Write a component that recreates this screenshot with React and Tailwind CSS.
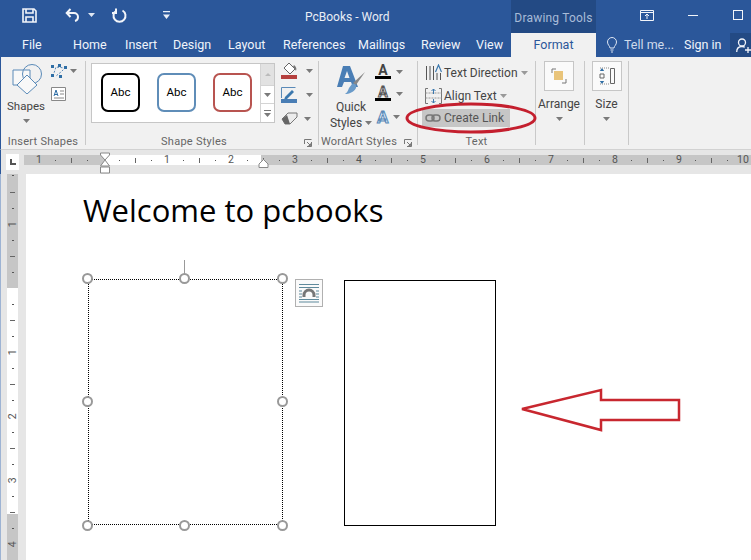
import React from "react";

const Caret = ({ className = "" }) => (
  <svg width="7" height="4" viewBox="0 0 7 4" className={`shrink-0 ${className}`}><path d="M0 0h7L3.5 4z" fill="#7a7a7a" /></svg>
);

const Launcher = ({ className = "" }) => (
  <svg width="8" height="8" viewBox="0 0 8 8" className={`shrink-0 ${className}`} fill="none" stroke="#777"><path d="M.5 5V.5H7.5" /><path d="M7.5 3v4.5H3" /><path d="M3 3l3.5 3.5M6.5 4.5v2h-2" /></svg>
);

const tabs = [["File", 51], ["Home", 52], ["Insert", 48], ["Design", 55], ["Layout", 55], ["References", 75], ["Mailings", 63], ["Review", 55], ["View", 35]];

function TitleBar() {
  return (
    <div className="flex h-[33px] bg-[#2b579a] text-[#e9eef6]">
      <div className="flex w-[511px] items-center pb-[3px] pl-[22px]">
        <svg width="15" height="15" viewBox="0 0 15 15" fill="none" stroke="#f2f5fa" strokeWidth="1.6"><path d="M1 1h11l2 2v11H1z" /><path d="M4 1v4h7V1M4 14V9h7v5" /></svg>
        <svg className="ml-[28px]" width="15" height="14" viewBox="0 0 15 14" fill="none" stroke="#f2f5fa" strokeWidth="2"><path d="M5.500 1 1.700 5l3.800 4" /><path d="M2 5h7a4 4 0 0 1 4 4c0 2-1 3.500-3 4" /></svg>
        <Caret className="ml-[8px] [&_path]:fill-[#dfe7f3]" />
        <svg className="ml-[17px]" width="15" height="15" viewBox="0 0 15 15" fill="none" stroke="#f2f5fa" strokeWidth="2"><path d="M10.500 2.500a6 6 0 1 1-6 0" /><path d="M4 0.500v4.500H0" /></svg>
        <svg className="ml-[36px]" width="7" height="8" viewBox="0 0 7 8"><path d="M0 0h7v1.200H0zM0 3.500h7L3.500 8z" fill="#e9eef6" /></svg>
        <span className="ml-[135px] pt-[4px] text-[12px] leading-none whitespace-nowrap">PcBooks - Word</span>
      </div>
      <div className="flex w-[85px] items-center justify-center bg-[#234a84] pt-[3px] text-[12px] tracking-[.2px] whitespace-nowrap text-[#a8bcd8]">Drawing Tools</div>
      <div className="flex flex-1 items-center pb-[3px] pl-[44px]">
        <svg width="14" height="11" viewBox="0 0 14 11" fill="none" stroke="#f2f5fa"><path d="M.5.5h13v10H.5zM.5 2.500h13" /><path d="M7 9V4M5 6l2-2 2 2" /></svg>
        <span className="ml-[34px] h-[1px] w-[10px] bg-[#f2f5fa]" />
        <span className="ml-[35px] h-[10px] w-[10px] border border-[#f2f5fa]" />
      </div>
    </div>
  );
}

function TabBar() {
  return (
    <div className="flex h-[24px] items-center bg-[#2b579a] pl-[22px] text-[12.500px] text-[#f0f4fa]">
      {tabs.map(([t, w]) => <span key={t} style={{ width: w }} className="shrink-0">{t}</span>)}
      <span className="flex h-full w-[85px] shrink-0 items-center justify-center bg-[#f1f1f1] text-[#2b579a]">Format</span>
      <svg className="ml-[11px]" width="10" height="16" viewBox="0 0 10 16" fill="none" stroke="#dfe7f3"><path d="M3 11c0-2-2.500-3-2.500-6a4.500 4.500 0 0 1 9 0c0 3-2.500 4-2.500 6zM3.500 13h3M4 15h2" /></svg>
      <span className="ml-[7px] w-[60px] shrink-0 whitespace-nowrap text-[#cfdbec]">Tell me...</span>
      <span className="w-[46px] shrink-0 whitespace-nowrap">Sign in</span>
      <span className="flex h-full flex-1 items-center bg-[#234a84] pl-[6px]">
        <svg width="15" height="15" viewBox="0 0 15 15" fill="none" stroke="#f2f5fa" strokeWidth="1.300"><circle cx="6" cy="4.500" r="3.500" /><path d="M.7 14c0-3.500 2-5.500 5.300-5.500 1 0 2 .2 2.800.7M9 12h6M12 9v6" /></svg>
      </span>
    </div>
  );
}

function Group({ w, label, children }) {
  return (
    <div style={{ width: w }} className="flex h-[84px] shrink-0 flex-col border-r border-[#c9c9c9]">
      <div className="flex h-[73px]">{children}</div>
      <div className="-mb-[3px] flex h-[14px] items-center justify-center text-[11px] leading-none tracking-[.25px] whitespace-nowrap text-[#666]">
        {label}
      </div>
    </div>
  );
}

const AbcBox = ({ border }) => (
  <div className={`flex h-[39px] w-[39px] items-center justify-center rounded-[7px] border-2 text-[11.500px] text-black ${border}`}>Abc</div>
);

const ABar = ({ hollow }) => (
  <span className="flex w-[16px] flex-col items-center">
    <span className={`text-[14px] leading-[12px] font-bold ${hollow ? "text-white [-webkit-text-stroke:1px_#555]" : "text-[#444]"}`}>A</span>
    <span className="h-[3px] w-[16px] bg-black" />
  </span>
);

function Ribbon() {
  return (
    <div className="flex h-[93px] border-b border-l border-b-[#d2d2d2] border-l-[#2b579a] bg-[#f1f1f1] pt-[4px] text-[12px] text-[#444]">
      <Group w={85} label="Insert Shapes">
        <div className="flex w-[50px] flex-col items-center pt-[3px]">
          <svg width="30" height="30" viewBox="0 0 30 30" fill="none" stroke="#5a8ab8" strokeWidth="1" className="ml-[1px]">
            <path d="M1 6h17v15H1z" fill="#f8f8f8" />
            <circle cx="20" cy="10" r="9.500" />
            <path d="M15 11l10 10-10 9-10-9z" fill="#f8f8f8" />
          </svg>
          <span className="mt-[4px] text-[11.500px] leading-[16px]">Shapes</span>
          <Caret className="mt-[5px]" />
        </div>
        <div className="flex flex-col pt-[3px]">
          <div className="flex items-center">
            <svg width="16" height="14" viewBox="0 0 16 14" fill="none" stroke="#5a8ab8"><path d="M2 12l3-9 9 1-4 4-5 4" strokeDasharray="2 1.500" /><path d="M0 1h3v3H0zM7 0h3v3H7zM13 2h3v3h-3zM0 10h3v3H0zM8 11h3v3H8z" fill="#2f6ea5" stroke="none" /></svg>
            <Caret className="ml-[3px]" />
          </div>
          <svg className="mt-[9px]" width="15" height="14" viewBox="0 0 15 14" fill="none"><path d="M.5.5h14v13H.5z" stroke="#888" fill="#fff" /><path d="M3 9l2-6 2 6M3.700 7.500h2.600" stroke="#2f6ea5" /><path d="M9 4h4M9 7h4M3 11h10" stroke="#888" /></svg>
        </div>
      </Group>

      <Group w={233} label={<span className="relative flex w-full justify-center pr-[16px]">Shape Styles<Launcher className="absolute top-[3px] right-[6px]" /></span>}>
        <div className="mt-[2px] ml-[5px] flex h-[60px] w-[184px] border border-[#c6c6c6] bg-white">
          <div className="flex flex-1 items-center gap-[17px] pb-[1px] pl-[9px]">
            <AbcBox border="border-black" />
            <AbcBox border="border-[#5f8db8]" />
            <AbcBox border="border-[#b85450]" />
          </div>
          <div className="flex w-[14px] flex-col border-l border-[#d4d4d4]">
            <div className="flex h-[21px] items-center justify-center bg-[#e2e2e2]"><svg width="6" height="3" viewBox="0 0 6 3"><path d="M0 3h6L3 0z" fill="#bbb" /></svg></div>
            <div className="flex h-[19px] items-center justify-center border-y border-[#d4d4d4]"><Caret /></div>
            <div className="flex flex-1 flex-col items-center justify-center gap-[2px]"><span className="h-[1px] w-[7px] bg-[#777]" /><Caret /></div>
          </div>
        </div>
        <div className="ml-[6px] flex flex-col pt-[1px]">
          <div className="flex items-center gap-[8px]">
            <svg width="17" height="18" viewBox="0 0 17 18"><path d="M8 1l6 6-5 5-6-6z" fill="#fff" stroke="#666" /><path d="M13 3c2 2 3 3 2 6-1-2-2-3-3-4z" fill="#777" /><rect x="0" y="13" width="16" height="4" fill="#b5403e" /></svg>
            <Caret />
          </div>
          <div className="mt-[7px] flex items-center gap-[8px]">
            <svg width="17" height="16" viewBox="0 0 17 16" fill="none"><path d="M.5 11V.5h14" stroke="#5a8ab8" /><path d="M4 10l7-7 2 2-7 7-3 1z" fill="#3b78ae" /><rect x="0" y="12" width="16" height="4" fill="#4a7eb5" /></svg>
            <Caret />
          </div>
          <div className="mt-[9px] flex items-center gap-[6px]">
            <svg width="17" height="13" viewBox="0 0 17 13"><path d="M1 7l6-6h9v4l-7 7H4z" fill="#ececec" stroke="#777" /><path d="M1 7l3 5h5L6 3z" fill="#666" /></svg>
            <Caret />
          </div>
        </div>
      </Group>

      <Group w={99} label={<span className="relative flex w-full justify-center pr-[18px]">WordArt Styles<Launcher className="absolute top-[3px] right-[5px]" /></span>}>
        <div className="flex w-[56px] flex-col items-center pt-[4px] pl-[8px]">
          <svg width="30" height="31" viewBox="0 0 30 31">
            <path d="M7 1h7l8 21h-5l-2-5H8l-2 5H1zm1.500 12h5L11 6z" fill="#4a7eb5" />
            <path d="M29 7 20 20l-3-2z" fill="#888" />
            <path d="M16 19c3-1 5 1 4 4-2 4-7 6-11 6 3-2 3-4 4-6 1-1 2-3 3-4z" fill="#6a9bc9" />
          </svg>
          <span className="mt-[3px] leading-[16px]">Quick</span>
          <span className="flex items-center gap-[3px] leading-[16px] whitespace-nowrap">Styles<Caret /></span>
        </div>
        <div className="flex flex-col pt-[3px]">
          <div className="flex items-center gap-[5px]"><ABar /><Caret /></div>
          <div className="mt-[7px] flex items-center gap-[5px]"><ABar hollow /><Caret /></div>
          <div className="mt-[7px] ml-[2px] flex items-center gap-[5px]"><span className="text-[17px] leading-[18px] font-bold text-[#dbe8f5] [-webkit-text-stroke:1px_#5a8ab8]">A</span><Caret /></div>
        </div>
      </Group>

      <Group w={118} label="Text">
        <div className="flex flex-col pl-[4px] text-[12px]">
          <div className="flex h-[23px] items-center gap-[2px] pl-[3px] whitespace-nowrap">
            <svg width="17" height="18" viewBox="0 0 17 18" fill="none" stroke="#555"><path d="M1.500 2v14M5 2v14M8.500 2v14M12 9v7M15.500 9v7" /><path d="M10.500 8l3-7 3 7" stroke="#3b78ae" strokeWidth="1.200" /></svg>
            Text Direction<Caret className="ml-[1px] [&_path]:fill-[#999]" />
          </div>
          <div className="flex h-[23px] items-center gap-[2px] pl-[3px] whitespace-nowrap">
            <svg width="17" height="16" viewBox="0 0 17 16" fill="none"><path d="M3 .5H.5v15H3M14 .5h2.500v15H14" stroke="#777" /><path d="M.5 5h16M.5 10h16" stroke="#999" strokeDasharray="2 1" /><path d="M8.500 1v5M6.500 3l2-2 2 2M8.500 15v-4M6.500 13l2 2 2-2" stroke="#3b78ae" /></svg>
            Align Text<Caret className="ml-[1px] [&_path]:fill-[#999]" />
          </div>
          <div className="mt-[2px] flex h-[18px] w-[88px] items-center gap-[3px] bg-[#c6c6c6] pl-[3px] whitespace-nowrap text-[#555]">
            <svg width="16" height="8" viewBox="0 0 16 8" fill="none" stroke="#777" strokeWidth="1.500"><rect x="1" y="1" width="8" height="6" rx="3" /><rect x="7" y="1" width="8" height="6" rx="3" /></svg>
            Create Link
          </div>
        </div>
      </Group>

      <Group w={49}>
        <div className="flex w-full flex-col items-center pr-[2px]">
          <div className="flex h-[30px] w-[30px] items-center justify-center border border-[#c6c6c6] bg-[#fafafa]">
            <svg width="16" height="16" viewBox="0 0 16 16" fill="none"><rect x="3" y="3" width="9" height="9" fill="#e9c47a" /><path d="M1 5V1h4M15 11v4h-4" stroke="#777" /></svg>
          </div>
          <span className="mt-[5px] leading-[16px]">Arrange</span>
          <Caret className="mt-[5px]" />
        </div>
      </Group>

      <Group w={44}>
        <div className="flex w-full flex-col items-center">
          <div className="flex h-[30px] w-[30px] items-center justify-center border border-[#c6c6c6] bg-[#fafafa]">
            <svg width="16" height="18" viewBox="0 0 16 18" fill="none"><path d="M11.500 1.500h4v15h-4z" stroke="#666" /><path d="M3 1 .8 4h4.400zM3 17 .8 14h4.400z" fill="#2f6ea5" /><path d="M1 7h4v4H1z" stroke="#666" /><path d="M1 1h9M1 17h9" stroke="#888" strokeDasharray="1 1" /></svg>
          </div>
          <span className="mt-[5px] leading-[16px]">Size</span>
          <Caret className="mt-[5px]" />
        </div>
      </Group>
    </div>
  );
}

const slots = Array.from({ length: 45 }, (_, i) => i - 4);
const slotsV = Array.from({ length: 23 }, (_, i) => i - 6);

function HRuler() {
  return (
    <div className="flex h-[24px] border-l border-[#2b579a] bg-[#e6e6e6]">
      <div className="mt-[4px] ml-[5px] flex h-[16px] w-[14px] items-center justify-center bg-white">
        <span className="h-[6px] w-[6px] border-b-2 border-l-2 border-[#555]" />
      </div>
      <div className="mt-[5px] ml-[5px] flex h-[10px] flex-1 bg-[linear-gradient(to_right,#c6c6c6_80px,#fff_80px,#fff_237px,#c6c6c6_237px)] pl-[7px]">
        {slots.map((k) => (
          <div key={k} className="flex h-[10px] w-[16px] shrink-0 items-center justify-center text-[10.500px] leading-none text-[#555]">
            {k === 0 ? null : k % 4 === 0 ? Math.abs(k / 4) : k % 2 ? <span className="h-[1px] w-[1px] bg-[#555]" /> : <span className="h-[5px] w-[1px] bg-[#666]" />}
          </div>
        ))}
      </div>
    </div>
  );
}

function VRuler() {
  return (
    <div className="w-[26px] shrink-0 border-l border-[#9db3d3] bg-[#e6e6e6] pl-[6px]">
      <div className="h-full w-[11px] bg-[linear-gradient(to_bottom,#c6c6c6_114px,#fff_114px,#fff_340px,#c6c6c6_340px)]">
        <div className="flex h-[10px] items-start justify-center pt-[1px]"><span className="h-[1px] w-[2px] bg-[#555]" /></div>
        {slotsV.map((k) => (
          <div key={k} className="flex h-[16px] items-center justify-center text-[10.500px] leading-none text-[#555]">
            {k === 0 ? null : k % 4 === 0 ? <span className="-rotate-90">{Math.abs(k / 4)}</span> : k % 2 ? <span className="h-[1px] w-[2px] bg-[#555]" /> : <span className="h-[1px] w-[5px] bg-[#666]" />}
          </div>
        ))}
      </div>
    </div>
  );
}

const handles = [
  "-top-[7px] -left-[7px]", "-top-[7px] left-[90px]", "-top-[7px] -right-[6px]",
  "top-[116px] -left-[7px]", "top-[116px] -right-[6px]",
  "-bottom-[7px] -left-[7px]", "-bottom-[7px] left-[90px]", "-bottom-[7px] -right-[6px]",
];

function Canvas() {
  return (
    <div className="flex-1 bg-white pt-[14px] pl-[57px]">
      <h1 className="font-['Open_Sans',sans-serif] text-[31px] leading-[44px] font-normal whitespace-nowrap text-black">Welcome to pcbooks</h1>
      <div className="mt-[47px] ml-[5px] flex items-start">
        <div className="relative h-[246px] w-[195px] border border-dotted border-black">
          <span className="absolute -top-[20px] left-[95px] h-[14px] w-[1px] bg-[#999]" />
          {handles.map((h) => (
            <span key={h} className={`absolute h-[11px] w-[11px] rounded-full border-2 border-[#999] bg-white ${h}`} />
          ))}
        </div>
        <div className="ml-[12px] flex h-[28px] w-[28px] items-center justify-center border border-[#b0b0b0] bg-[#fafafa]">
          <svg width="20" height="20" viewBox="0 0 20 20" fill="none" stroke="#5f8a9c"><path d="M0 1.500h20M0 4.500h20M0 16.500h20M0 19h20M0 8h3M0 11h3M0 14h3M17 8h3M17 11h3M17 14h3" /><path d="M5 14V12a5 5 0 0 1 10 0v2" stroke="#777" strokeWidth="3" /></svg>
        </div>
        <div className="mt-[1px] ml-[21px] h-[246px] w-[152px] border border-black" />
        <svg className="mt-[109px] ml-[24px]" width="162" height="44" viewBox="0 0 162 44" fill="none">
          <path d="M2 21 81 2v10h78v20H81v10z" stroke="#c8272f" strokeWidth="2.500" fill="#fff" />
        </svg>
      </div>
    </div>
  );
}

export default function App() {
  return (
    <div className="relative flex h-[560px] w-[751px] flex-col overflow-hidden bg-white font-['Roboto','Open_Sans',sans-serif]">
      <TitleBar />
      <TabBar />
      <Ribbon />
      <HRuler />
      <div className="flex min-h-0 flex-1">
        <VRuler />
        <Canvas />
      </div>
      <svg className="pointer-events-none absolute top-[102px] left-[405px]" width="133" height="32" viewBox="0 0 133 32" fill="none">
        <ellipse cx="66" cy="16" rx="64" ry="14" stroke="#c41f2e" strokeWidth="3" />
      </svg>
      <svg className="pointer-events-none absolute top-[152px] left-[99px]" width="12" height="22" viewBox="0 0 12 22" fill="#fff" stroke="#888">
        <path d="M1.500 1h9v2L6 8 1.500 3zM6 8l4.500 6H1.500zM1.500 15h9v6h-9z" />
      </svg>
      <svg className="pointer-events-none absolute top-[159px] left-[258px]" width="11" height="9" viewBox="0 0 11 9" fill="#fff" stroke="#888">
        <path d="M5.500.5 10 5v3.500H1V5z" />
      </svg>
    </div>
  );
}
